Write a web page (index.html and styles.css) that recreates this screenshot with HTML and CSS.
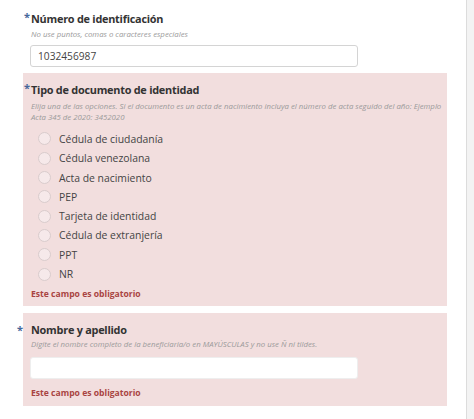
FILE: index.html
```html
<!DOCTYPE html>
<html lang="es">
<head>
<meta charset="utf-8">
<title>Formulario</title>
<link rel="stylesheet" href="styles.css">
</head>
<body>
<div class="page">
  <main class="form">
    <section class="field first">
      <h2 class="title"><span class="req">*</span>Número de identificación</h2>
      <p class="help">No use puntos, comas o caracteres especiales</p>
      <div class="input">1032456987</div>
    </section>

    <section class="field error second">
      <h2 class="title"><span class="req">*</span>Tipo de documento de identidad</h2>
      <p class="help"><span class="line">Elija una de las opciones. Si el documento es un acta de nacimiento incluya el número de acta seguido del año: Ejemplo</span><br>Acta 345 de 2020: 3452020</p>
      <ul class="radios">
        <li><span class="circle"></span>Cédula de ciudadanía</li>
        <li><span class="circle"></span>Cédula venezolana</li>
        <li><span class="circle"></span>Acta de nacimiento</li>
        <li><span class="circle"></span>PEP</li>
        <li><span class="circle"></span>Tarjeta de identidad</li>
        <li><span class="circle"></span>Cédula de extranjería</li>
        <li><span class="circle"></span>PPT</li>
        <li><span class="circle"></span>NR</li>
      </ul>
      <p class="msg">Este campo es obligatorio</p>
    </section>

    <section class="field error third">
      <h2 class="title"><span class="req req-low">*</span>Nombre y apellido</h2>
      <p class="help">Digite el nombre completo de la beneficiaria/o en MAYÚSCULAS y no use Ñ ni tildes.</p>
      <div class="input empty"></div>
      <p class="msg">Este campo es obligatorio</p>
    </section>
  </main>
  <div class="scroll"></div>
</div>
</body>
</html>
```

FILE: styles.css
```css
* { box-sizing: border-box; }
html, body { margin: 0; padding: 0; background: #fff; }
body {
  font-family: "Open Sans", "Noto Sans", sans-serif;
  color: #333;
  width: 474px;
  height: 419px;
  overflow: hidden;
}
.page {
  display: flex;
  height: 419px;
}
.form {
  width: 466px;
  padding: 0 0 0 23px;
}
.field {
  width: 424px;
  padding: 9px 6px 6px 7px;
}
.field.first {
  padding-top: 11px;
  padding-bottom: 6px;
}
.field.error {
  background: #f2dede;
  margin-bottom: 7px;
}
.title {
  position: relative;
  margin: 0;
  font-size: 10.9px;
  font-weight: 700;
  letter-spacing: -0.25px;
  line-height: 16px;
  color: #333;
  padding-left: 1px;
}
.req {
  position: absolute;
  left: -6px;
  top: -2px;
  font-size: 11px;
  font-weight: 700;
  letter-spacing: 0;
  color: #46679a;
}
.req-low {
  left: -13px;
  top: 0;
}
.help {
  margin: 1.5px 0 0 1px;
  font-size: 7.8px;
  line-height: 11px;
  font-style: italic;
  color: #9a9a9a;
}
.help .line { white-space: nowrap; }
.second .help { margin-top: 2.5px; }
.input {
  margin-top: 5.5px;
  width: 328px;
  height: 22px;
  border: 1px solid #d4d4d4;
  border-radius: 3px;
  background: #fff;
  font-size: 10.2px;
  line-height: 20px;
  padding-left: 7px;
  color: #444;
}
.third .input { margin-top: 6.5px; border-color: #eee; }
.radios {
  list-style: none;
  margin: 6.8px 0 0 0;
  padding: 0 0 0 8px;
}
.radios li {
  display: flex;
  align-items: center;
  height: 19.3px;
  font-size: 10.4px;
  color: #444;
}
.circle {
  width: 13px;
  height: 13px;
  border: 1px solid #d9cccd;
  border-radius: 50%;
  background: #f6e9ea;
  margin-right: 8px;
}
.msg {
  margin: 4.2px 0 0 1px;
  font-size: 8.6px;
  line-height: 12px;
  font-weight: 700;
  color: #a94442;
}
.third .msg { margin-top: 8px; }
.third { padding-bottom: 7px; }
.scroll {
  width: 8px;
  height: 419px;
  border-left: 1px solid #dcdcdc;
  background: #f3f3f3;
}
```
